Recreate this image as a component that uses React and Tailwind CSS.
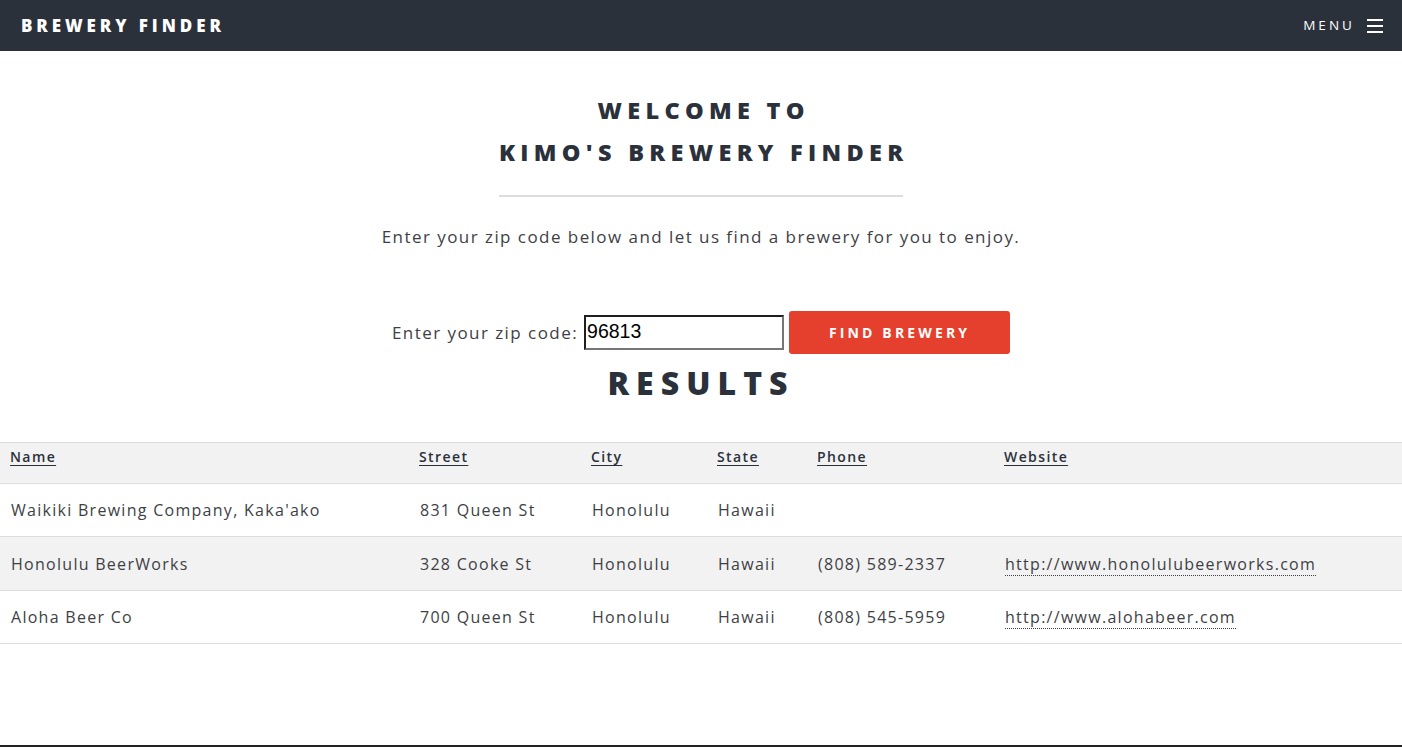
import React from "react";

const rows = [
  { name: "Waikiki Brewing Company, Kaka'ako", street: "831 Queen St", city: "Honolulu", state: "Hawaii", phone: "", web: "", h: "h-[53px]" },
  { name: "Honolulu BeerWorks", street: "328 Cooke St", city: "Honolulu", state: "Hawaii", phone: "(808) 589-2337", web: "http://www.honolulubeerworks.com", h: "h-[54px]" },
  { name: "Aloha Beer Co", street: "700 Queen St", city: "Honolulu", state: "Hawaii", phone: "(808) 545-5959", web: "http://www.alohabeer.com", h: "h-[53px]" },
];

const cols = "grid grid-cols-[409px_172px_126px_100px_187px_1fr]";

export default function App() {
  return (
    <div className="min-h-[747px] bg-white flex flex-col" style={{ fontFamily: '"Open Sans", "Noto Sans", sans-serif' }}>
      <header className="h-[51px] bg-[#2b313b] flex items-center justify-between pl-[21px] pr-[19px] shrink-0">
        <h1 className="text-white font-extrabold text-[17px] tracking-[0.23em] uppercase">Brewery Finder</h1>
        <div className="flex items-center gap-[12px] text-white">
          <span className="text-[13.5px] tracking-[0.225em] uppercase">Menu</span>
          <svg width="16" height="14" viewBox="0 0 16 14" className="block">
            <rect x="0" y="0" width="16" height="2" fill="#fff" />
            <rect x="0" y="6" width="16" height="2" fill="#fff" />
            <rect x="0" y="12" width="16" height="2" fill="#fff" />
          </svg>
        </div>
      </header>

      <main className="flex-1 flex flex-col items-center">
        <div className="mt-[38px] inline-flex flex-col items-center">
          <h2 className="text-[#2b313b] font-extrabold text-[23.5px] leading-[42px] tracking-[0.225em] uppercase text-center mr-[-0.225em]">
            Welcome to<br />Kimo's Brewery Finder
          </h2>
          <div className="mt-[22px] h-[2px] w-full bg-[#dddddd]" />
        </div>
        <p className="mt-[27px] text-[17px] leading-[26px] tracking-[0.085em] text-[#3e3f45]">
          Enter your zip code below and let us find a brewery for you to enjoy.
        </p>

        <div className="mt-[61px] flex items-center">
          <label className="text-[17px] tracking-[0.085em] text-[#3e3f45] mr-[6px]">Enter your zip code:</label>
          <input
            defaultValue="96813"
            className="w-[200px] h-[35px] border-2 border-t-[#1f1f1f] border-l-[#1f1f1f] border-r-[#767676] border-b-[#767676] px-[1px] pb-[2px] text-[19.5px] text-black outline-none"
            style={{ fontFamily: '"Liberation Sans", Arial, sans-serif' }}
          />
          <button className="ml-[5px] w-[221px] h-[43px] bg-[#e5402d] rounded-[3px] text-white font-bold text-[14px] tracking-[0.225em] uppercase">
            Find Brewery
          </button>
        </div>

        <h3 className="mt-[8px] text-[#2b313b] font-extrabold text-[32px] leading-[42px] tracking-[0.22em] uppercase">
          Results
        </h3>

        <div className="mt-[38px] w-full">
          <div className={`${cols} h-[42px] bg-[#f2f2f2] border-t border-b border-[#dddddd] pl-[10px] pt-[3px]`}>
            {["Name", "Street", "City", "State", "Phone", "Website"].map((h) => (
              <span key={h} className="text-[14px] font-semibold tracking-[0.1em] text-[#2b313b] underline underline-offset-[3px] leading-[22px]">
                <span>{h}</span>
              </span>
            ))}
          </div>
          {rows.map((r, i) => (
            <div
              key={r.name}
              className={`${cols} ${r.h} items-center border-b border-[#dddddd] pl-[11px] text-[16px] tracking-[0.08em] text-[#3e3f45] ${i % 2 === 1 ? "bg-[#f2f2f2]" : "bg-white"}`}
            >
              <span>{r.name}</span>
              <span>{r.street}</span>
              <span>{r.city}</span>
              <span>{r.state}</span>
              <span>{r.phone}</span>
              <span>
                {r.web && (
                  <a href="#" className="border-b border-dotted border-[#3e3f45] text-[#3e3f45]">{r.web}</a>
                )}
              </span>
            </div>
          ))}
        </div>
      </main>
      <div className="h-[2px] bg-[#222222] shrink-0" />
    </div>
  );
}
